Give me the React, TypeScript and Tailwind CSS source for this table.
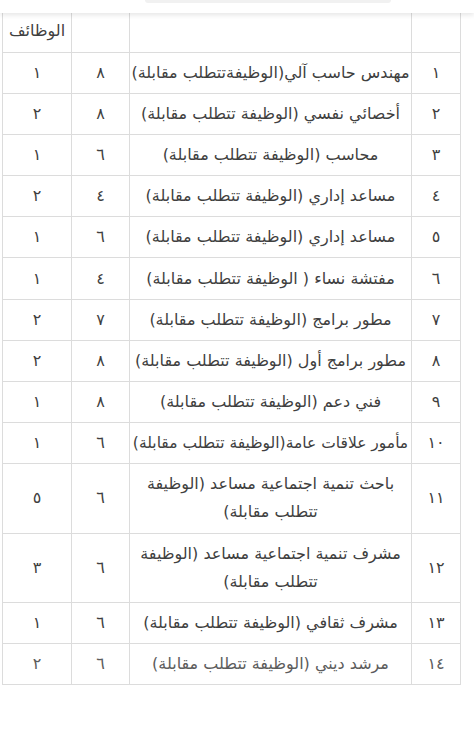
import React from "react";

const rows: [string, React.ReactNode, string, string][] = [
  ["١", "مهندس حاسب آلي(الوظيفةتتطلب مقابلة)", "٨", "١"],
  ["٢", "أخصائي نفسي (الوظيفة تتطلب مقابلة)", "٨", "٢"],
  ["٣", "محاسب (الوظيفة تتطلب مقابلة)", "٦", "١"],
  ["٤", "مساعد إداري (الوظيفة تتطلب مقابلة)", "٤", "٢"],
  ["٥", "مساعد إداري (الوظيفة تتطلب مقابلة)", "٦", "١"],
  ["٦", "مفتشة نساء ( الوظيفة تتطلب مقابلة)", "٤", "١"],
  ["٧", "مطور برامج (الوظيفة تتطلب مقابلة)", "٧", "٢"],
  ["٨", "مطور برامج أول (الوظيفة تتطلب مقابلة)", "٨", "٢"],
  ["٩", "فني دعم (الوظيفة تتطلب مقابلة)", "٨", "١"],
  ["١٠", <span className="text-[15.5px]">مأمور علاقات عامة(الوظيفة تتطلب مقابلة)</span>, "٦", "١"],
  ["١١", <>باحث تنمية اجتماعية مساعد (الوظيفة<br />تتطلب مقابلة)</>, "٦", "٥"],
  ["١٢", <>مشرف تنمية اجتماعية مساعد (الوظيفة<br />تتطلب مقابلة)</>, "٦", "٣"],
  ["١٣", "مشرف ثقافي (الوظيفة تتطلب مقابلة)", "٦", "١"],
  ["١٤", "مرشد ديني (الوظيفة تتطلب مقابلة)", "٦", "٢"],
];

const cell = "border border-[#dcdcdc] text-center align-middle pt-[6.1px] pb-[6.1px] px-0 whitespace-nowrap";

export default function App() {
  return (
    <div
      className="relative w-[474px] h-[730px] bg-white overflow-hidden text-[#3f3f3f] text-[16px] leading-[28px]"
      style={{ fontFamily: '"DejaVu Sans", "Noto Sans", sans-serif' }}
    >
      <div className="absolute top-0 left-0 right-0 h-[13px] bg-white shadow-[0_2px_5px_rgba(0,0,0,0.10)] z-10">
        <div className="ml-[145px] w-[246px] h-[3px] bg-[#f1f1f1] rounded-b" />
      </div>
      <div className="pl-[2px]">
        <table dir="rtl" className="border-collapse table-fixed w-[459px]">
          <colgroup>
            <col className="w-[49px]" />
            <col className="w-[282px]" />
            <col className="w-[58px]" />
            <col className="w-[69px]" />
          </colgroup>
          <tbody>
            <tr className="h-[52px]">
              <td className="border border-[#dcdcdc] border-t-0" />
              <td className="border border-[#dcdcdc] border-t-0" />
              <td className="border border-[#dcdcdc] border-t-0" />
              <td className="border border-[#dcdcdc] border-t-0 text-center align-bottom pb-[7px]">الوظائف</td>
            </tr>
            {rows.map((r, i) => (
              <tr key={i} className={i === rows.length - 1 ? "text-[#5c5c5c]" : ""}>
                <td className={cell}>{r[0]}</td>
                <td className={cell}>{r[1]}</td>
                <td className={cell}>{r[2]}</td>
                <td className={cell}>{r[3]}</td>
              </tr>
            ))}
          </tbody>
        </table>
      </div>
    </div>
  );
}
